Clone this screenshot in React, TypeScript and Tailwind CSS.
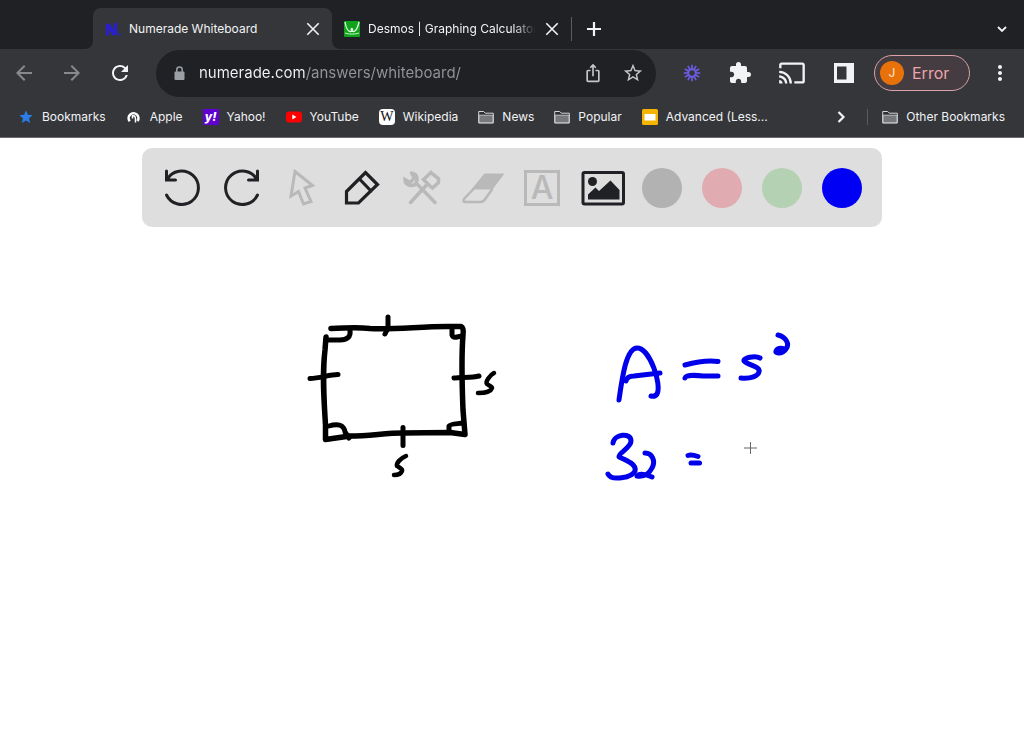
import { useState } from 'react';
import type { ReactNode } from 'react';
import {
  MdArrowBack,
  MdArrowForward,
  MdCast,
  MdExtension,
  MdIosShare,
  MdMoreVert,
  MdRefresh,
  MdStar,
  MdStarBorder,
} from 'react-icons/md';

function NumeradeIcon() {
  return (
    <svg viewBox="0 0 16 16" className="size-4 shrink-0">
      <path d="M2.500 14.500V3M3 3l6.500 11M10.500 14V2" stroke="#2a20c8" strokeWidth="3.500" fill="none" />
      <circle cx="14.800" cy="13.500" r="1.200" fill="#2a20c8" />
    </svg>
  );
}

function DesmosIcon() {
  return (
    <svg viewBox="0 0 16 16" className="size-4 shrink-0">
      <rect width="16" height="16" rx="1" fill="#0fa31c" />
      <path d="M1 1c1 6 2 9 5 9.500C9 11 9 8 8 7.500 6 8 8 11 10 10.500 13 9 14 6 15 1" stroke="#e3fbe5" strokeWidth="1.300" fill="none" />
      <path d="M1 12c4 1.500 10 1.500 14 0" stroke="#c9f3cd" fill="none" />
    </svg>
  );
}

function CloseIcon() {
  return (
    <svg viewBox="0 0 18 18" className="size-[18px]" stroke="currentColor" strokeWidth="1.600">
      <path d="M3.300 3.300l11.400 11.400M14.700 3.300L3.300 14.700" />
    </svg>
  );
}

function FolderIcon() {
  return (
    <svg viewBox="0 0 16 16" className="size-4 shrink-0">
      <path d="M.7 2.500h5l1.600 1.700h8v9.800H.7z" fill="#2f3033" stroke="#d4d5d7" />
      <path d="M1 6.200h14v7.500H1z" fill="#77787b" stroke="#d4d5d7" strokeWidth=".8" />
    </svg>
  );
}

function AppleSiteIcon() {
  return (
    <svg viewBox="0 0 16 16" className="size-4 shrink-0">
      <path d="M3.700 12.200A4.900 4.900 0 1 1 11.500 12" stroke="#fff" strokeWidth="2.600" fill="none" />
      <path d="M6.500 9.500V6.500c2.500 0 3 1.500 3 3.500v3.500" stroke="#fff" strokeWidth="1.500" fill="none" />
    </svg>
  );
}

function YahooIcon() {
  return (
    <span className="flex size-4 shrink-0 items-center justify-center bg-[#5f01d1] text-xs font-extrabold italic leading-none text-white">
      y!
    </span>
  );
}

function YouTubeIcon() {
  return (
    <svg viewBox="0 0 16 16" className="size-4 shrink-0">
      <rect y="2.500" width="16" height="11" rx="3" fill="#f00" />
      <path d="M6.300 5.600v4.800L10.400 8z" fill="#fff" />
    </svg>
  );
}

function WikipediaIcon() {
  return (
    <span className="flex size-4 shrink-0 items-center justify-center rounded-sm bg-white font-['Liberation_Serif',serif] text-sm leading-none text-[#111]">
      W
    </span>
  );
}

function SlidesIcon() {
  return (
    <svg viewBox="0 0 16 16" className="size-4 shrink-0">
      <rect width="16" height="16" rx="1.500" fill="#f4b400" />
      <rect x="2.500" y="5" width="11" height="6.500" fill="#fff" />
    </svg>
  );
}

function BurstIcon() {
  const angles = [0, 30, 60, 90, 120, 150, 180, 210, 240, 270, 300, 330];
  return (
    <svg viewBox="0 0 18 18" className="size-[18px]">
      {angles.map((a) => (
        <path key={a} d="M9 .8v5" transform={`rotate(${a} 9 9)`} stroke="#6a5be0" strokeWidth="1.700" />
      ))}
      <circle cx="9" cy="9" r="3.800" stroke="#6a5be0" strokeWidth="2" fill="none" />
    </svg>
  );
}

const bookmarks: { label: string; icon: ReactNode }[] = [
  { label: 'Bookmarks', icon: <MdStar className="size-4 shrink-0 text-[#2b7de9]" /> },
  { label: 'Apple', icon: <AppleSiteIcon /> },
  { label: 'Yahoo!', icon: <YahooIcon /> },
  { label: 'YouTube', icon: <YouTubeIcon /> },
  { label: 'Wikipedia', icon: <WikipediaIcon /> },
  { label: 'News', icon: <FolderIcon /> },
  { label: 'Popular', icon: <FolderIcon /> },
  { label: 'Advanced (Less...', icon: <SlidesIcon /> },
];

function TabStrip() {
  return (
    <div className="flex h-[49px] items-end bg-[#202124] pl-[93px] pr-3 text-xs text-[#f1f3f4]">
      <div className="relative flex h-[41px] w-[239px] items-center rounded-t-lg bg-[#35363a] pl-3 pr-[10px]">
        <svg viewBox="0 0 8 8" className="absolute -left-2 bottom-0 size-2">
          <path d="M8 0v8H0a8 8 0 0 0 8-8" fill="#35363a" />
        </svg>
        <svg viewBox="0 0 8 8" className="absolute -right-2 bottom-0 size-2">
          <path d="M0 0v8h8a8 8 0 0 1-8-8" fill="#35363a" />
        </svg>
        <NumeradeIcon />
        <span className="ml-2 flex-1 whitespace-nowrap">Numerade Whiteboard</span>
        <button aria-label="Close tab">
          <CloseIcon />
        </button>
      </div>
      <div className="flex h-[41px] w-[239px] items-center pl-3 pr-[10px]">
        <DesmosIcon />
        <span className="ml-2 min-w-0 flex-1 overflow-hidden whitespace-nowrap mask-r-from-85% mask-r-to-98%">
          Desmos | Graphing Calculator
        </span>
        <button aria-label="Close tab" className="ml-1">
          <CloseIcon />
        </button>
      </div>
      <div className="flex h-[41px] flex-1 items-center">
        <div className="h-6 w-px bg-[#5a5c60]" />
        <button aria-label="New tab" className="ml-3">
          <svg viewBox="0 0 20 20" className="size-5" stroke="currentColor" strokeWidth="2.200">
            <path d="M10 3v14M3 10h14" />
          </svg>
        </button>
        <button aria-label="Search tabs" className="ml-auto">
          <svg viewBox="0 0 20 20" className="size-5" fill="none" stroke="currentColor" strokeWidth="1.800">
            <path d="M6 8l4 4 4-4" />
          </svg>
        </button>
      </div>
    </div>
  );
}

function AddressBar() {
  const [url, setUrl] = useState('numerade.com/answers/whiteboard/');
  return (
    <div className="flex h-12 items-center pl-3 pr-3 text-[#f1f3f4]">
      <div className="flex gap-6">
        <button aria-label="Back" className="text-[#87898d]">
          <MdArrowBack className="size-6" />
        </button>
        <button aria-label="Forward" className="text-[#87898d]">
          <MdArrowForward className="size-6" />
        </button>
        <button aria-label="Reload">
          <MdRefresh className="size-6" />
        </button>
      </div>
      <div className="ml-6 flex h-[47px] min-w-0 flex-1 items-center rounded-full bg-[#202124] pl-4 pr-3 text-[#c4c6c9]">
        <svg viewBox="0 0 15 15" className="size-[15px] shrink-0 text-[#9aa0a6]" fill="currentColor">
          <rect x="2.500" y="5.500" width="10" height="8.500" rx="1" />
          <path d="M4.800 6V3.800a2.700 2.700 0 0 1 5.400 0V6" fill="none" stroke="currentColor" strokeWidth="1.500" />
        </svg>
        <input
          aria-label="Address"
          value={url}
          onChange={(e) => setUrl(e.target.value)}
          className="ml-3 min-w-0 flex-1 bg-[linear-gradient(90deg,#f4f5f6_107px,#92959a_107px)] bg-clip-text text-[15px] text-transparent outline-none"
        />
        <button aria-label="Share">
          <MdIosShare className="size-5" />
        </button>
        <button aria-label="Bookmark this tab" className="ml-[19px]">
          <MdStarBorder className="size-[22px]" />
        </button>
      </div>
      <div className="ml-[27px] flex items-center">
        <button aria-label="Loom">
          <BurstIcon />
        </button>
        <button aria-label="Extensions" className="ml-[27px]">
          <MdExtension className="size-6" />
        </button>
        <button aria-label="Cast" className="ml-[26px]">
          <MdCast className="size-7" />
        </button>
        <button aria-label="Side panel" className="ml-[27px]">
          <svg viewBox="0 0 22 22" className="size-[22px]">
            <path d="M1 1h20v20H1z M4 4.500h9.500v13H4z" fill="currentColor" fillRule="evenodd" />
          </svg>
        </button>
      </div>
      <button className="ml-[19px] flex h-9 w-24 items-center gap-2 rounded-full border border-[#d9a3a8] bg-[#443c40] pl-[5px] text-base text-[#eda4ab]">
        <span className="flex size-6 items-center justify-center rounded-full bg-[#e8710a] text-xs text-[#fce8d8]">J</span>
        Error
      </button>
      <button aria-label="Menu" className="ml-[18px]">
        <MdMoreVert className="size-6" />
      </button>
    </div>
  );
}

function BookmarksBar() {
  return (
    <div className="flex h-[41px] items-center justify-between border-b border-[#6b6c6f] pl-[18px] pr-[19px] text-xs text-[#f1f3f4]">
      <div className="flex gap-5">
        {bookmarks.map((b) => (
          <a key={b.label} href="#" className="flex items-center gap-2 whitespace-nowrap">
            {b.icon}
            {b.label}
          </a>
        ))}
      </div>
      <div className="flex items-center">
        <button aria-label="More bookmarks">
          <svg viewBox="0 0 16 16" className="size-4" fill="none" stroke="currentColor" strokeWidth="2.200">
            <path d="M5.500 3l5 5-5 5" />
          </svg>
        </button>
        <div className="ml-[18px] mr-[14px] h-4 w-px bg-[#5a5c60]" />
        <a href="#" className="flex items-center gap-2 whitespace-nowrap">
          <FolderIcon />
          Other Bookmarks
        </a>
      </div>
    </div>
  );
}

const tools: { label: string; active: boolean; drawing: ReactNode }[] = [
  {
    label: 'Undo',
    active: true,
    drawing: <path d="M8.500 7v9h9M9 15.500A16.800 16.800 0 1 1 8.500 31" />,
  },
  {
    label: 'Redo',
    active: true,
    drawing: <path d="M39.500 7v9h-9M39 15.500A16.800 16.800 0 1 0 39.500 31" />,
  },
  {
    label: 'Select',
    active: false,
    drawing: <path d="M17 7.500L34.500 21.500 27 24l6 13.500-7.500 2.500-5-12.500-7.500 4.500z" />,
  },
  {
    label: 'Pen',
    active: true,
    drawing: <path d="M8.500 39V27.500L27.500 8.500 39.500 20.500 20.500 39zM21.500 15l11.500 12" strokeWidth="3.200" />,
  },
  {
    label: 'Tools',
    active: false,
    drawing: (
      <>
        <path d="M13.500 9c6 1 6.500 6 4.500 10l19 19.500M13.500 9l3 5-4.500 4.500-5-3c0 5 5.500 8 11 4.500" strokeWidth="3.500" />
        <path d="M12.500 38.500L29.500 20M25.500 15.500l7.500-7 1.500 1.500 6 4.500v4l-6 5.500-2.500-2z" strokeWidth="3.500" />
      </>
    ),
  },
  {
    label: 'Eraser',
    active: false,
    drawing: (
      <>
        <path d="M15.500 24.500L27 10.500h17.500L34 24.500z" fill="currentColor" strokeWidth="2" />
        <path d="M15.500 25L6 35c-1 2-.5 3 1 3h15.500c2 0 3-.5 4-2l7.500-10.500" strokeWidth="2.500" />
      </>
    ),
  },
  {
    label: 'Image',
    active: true,
    drawing: (
      <>
        <rect x="5" y="8.500" width="40.500" height="31.500" rx="1.500" strokeWidth="3" />
        <circle cx="14.500" cy="17.500" r="4.500" fill="currentColor" stroke="none" />
        <path d="M10 35.500v-5l7.500-7 3.500 3.500 11.500-10.500 9 9.500v9.500z" fill="currentColor" stroke="none" />
      </>
    ),
  },
];

const colors = [
  { name: 'gray', className: 'bg-[#b2b2b2]' },
  { name: 'red', className: 'bg-[#e1acb1]' },
  { name: 'green', className: 'bg-[#b5d1b3]' },
  { name: 'blue', className: 'bg-[#0000f5]' },
];

function ToolButton({ label, active, drawing }: { label: string; active: boolean; drawing: ReactNode }) {
  return (
    <button
      aria-label={label}
      className={`flex w-full justify-center ${active ? 'text-[#202124]' : 'text-[#b9b9b9]'}`}
    >
      <svg
        viewBox="0 0 48 48"
        className="size-12"
        fill="none"
        stroke="currentColor"
        strokeWidth="3"
        strokeLinecap="round"
      >
        {drawing}
      </svg>
    </button>
  );
}

function WhiteboardToolbar() {
  const [color, setColor] = useState('blue');
  return (
    <div className="mx-auto grid h-[79px] max-w-[740px] grid-cols-12 items-center rounded-[10px] bg-[#dedede] px-[10px]">
      {tools.slice(0, 6).map((t) => (
        <ToolButton key={t.label} {...t} />
      ))}
      <button
        aria-label="Text"
        className="mx-auto flex size-9 items-center justify-center border-3 border-[#b9b9b9] text-[32px] font-medium leading-none text-[#b9b9b9]"
      >
        A
      </button>
      <ToolButton {...tools[6]} />
      {colors.map((c) => (
        <input
          key={c.name}
          type="radio"
          name="ink"
          aria-label={c.name}
          checked={color === c.name}
          onChange={() => setColor(c.name)}
          className={`mx-auto size-10 appearance-none rounded-full ${c.className}`}
        />
      ))}
    </div>
  );
}

function Drawing() {
  return (
    <svg
      viewBox="142 227 740 300"
      className="mx-auto block w-full max-w-[740px]"
      fill="none"
      strokeLinecap="round"
      strokeLinejoin="round"
    >
      {/* square with right angles and tick marks */}
      <g stroke="#000" strokeWidth="5">
        <path d="M331 328.500C350 328 355 327 370 328.500C392 330 425 326 450 326.500L461 326.500Q464 328 463 335C461 360 462 385 463 410L465 434.500L450 432.500L403 433C385 433 370 436 350 436L325.500 439.500V425C324 400 322 375 325 350L326 337" strokeWidth="5.500" />
        <path d="M350 330c1 7-3 10-10 10h-13" />
        <path d="M452 329v6q1 3 5 2l5-1" />
        <path d="M329 426c9-3 15-1 16 6l4 6" />
        <path d="M463 423c-7 1-13 1-14 3v5" />
        <path d="M388 317v11l-3 6" />
        <path d="M310 378.500c10 0 19-4 28-4" />
        <path d="M454 378c8-1 18 0 25-2" />
        <path d="M403 427.500v18" />
      </g>
      <g stroke="#000" strokeWidth="4.500">
        <path d="M494 373c-4 2-9 9-7 11 2 2 5 2 5 4-1 3-6 5-14 5" />
        <path d="M406 456c-5 2-10 7-9 10 3 2 6 3 5 5-1 3-4 4-8 4" />
      </g>
      <g stroke="#0000ea" strokeWidth="5">
        {/* A = s^2 */}
        <path d="M619 400C622 379 626 348 637 348C650 348 662 385 657 394q-2 3-6 2" />
        <path d="M626 381q1-5 8-5l26-3" />
        <path d="M685 365c11-3 22-5 33-3.500" />
        <path d="M685 378c1-3 10-3 18-2h15" />
        <path d="M760 358c-5-3-17 0-16 3 3 4 17 5 15 11-1 4-8 7-18 6" />
        <path d="M778 335c8 2 12 9 8 14-3 5-11 5-10 2 2-4 6-3 9-2" />
        {/* 32 = */}
        <path d="M613 443C614 434 631 432 631 441C631 448 618 453 619 457C626 460 637 464 635 471C632 478 611 481 608 474" />
        <path d="M645 453c7 0 11 8 7 15-3 6-8 9-15 8 2-3 8-2 15 1" />
        <path d="M688 455.500c3-1 7 0 10 1" />
        <path d="M691 463h8.500" />
      </g>
      {/* pen cursor */}
      <path d="M744 448h13M750.500 442v12" stroke="#666" strokeLinecap="butt" />
    </svg>
  );
}

export default function App() {
  return (
    <div className="min-h-screen bg-white font-['Inter',sans-serif]">
      <header className="bg-[#35363a]">
        <TabStrip />
        <AddressBar />
        <BookmarksBar />
      </header>
      <main className="px-4 pt-[10px]">
        <WhiteboardToolbar />
        <Drawing />
      </main>
    </div>
  );
}
